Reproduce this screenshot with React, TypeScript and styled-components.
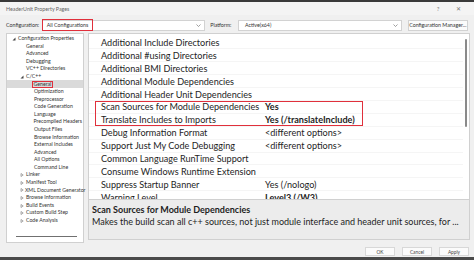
import styled, { createGlobalStyle } from "styled-components";

const GlobalStyle = createGlobalStyle`
  html, body {
    margin: 0;
    padding: 0;
    background: #f0f0f0;
  }
  body {
    font-family: Lato, "Liberation Sans", sans-serif;
  }
`;

const Window = styled.div`
  width: 474px;
  height: 260px;
  box-sizing: border-box;
  border-top: 2px solid #3a3a3a;
  border-bottom: 3px solid #4a4a4a;
  background: #f0f0f0;
  display: flex;
  flex-direction: column;
  overflow: hidden;
`;

const TitleBar = styled.div`
  height: 13px;
  display: flex;
  align-items: center;
  padding: 0 6px;
  font-size: 5.3px;
  color: #666;
  background: #f4f4f4;
`;

const TitleText = styled.div`
  flex: 1;
`;

const TitleButton = styled.div`
  width: 20px;
  text-align: center;
  font-size: 6px;
  color: #777;
`;

const ConfigBar = styled.div`
  height: 12px;
  margin-top: 4px;
  padding: 0 6px;
  display: flex;
  align-items: center;
  font-size: 5.3px;
  color: #333;
`;

const Label = styled.div<{ $width: number; $gap?: number }>`
  width: ${({ $width }) => $width}px;
  margin-left: ${({ $gap }) => $gap ?? 0}px;
`;

const Combo = styled.div<{ $width: number }>`
  width: ${({ $width }) => $width}px;
  height: 11px;
  box-sizing: border-box;
  background: #fff;
  border: 1px solid #d2d2d2;
  display: flex;
  align-items: center;
  justify-content: space-between;
  padding-right: 3px;
`;

const ComboValue = styled.div<{ $marked?: boolean }>`
  height: ${({ $marked }) => ($marked ? "12px" : "auto")};
  margin-left: ${({ $marked }) => ($marked ? "-1px" : "2px")};
  box-sizing: border-box;
  display: flex;
  align-items: center;
  padding: 0 4px;
  border: ${({ $marked }) => ($marked ? "1.5px solid #e0303c" : "none")};
`;

const ManagerButton = styled.div`
  margin-left: 6px;
  width: 61px;
  height: 11px;
  box-sizing: border-box;
  border: 1px solid #d2d2d2;
  background: #fbfbfb;
  display: flex;
  align-items: center;
  justify-content: center;
`;

const Main = styled.div`
  height: 210px;
  margin-top: 2px;
  padding: 0 4px 0 6px;
  display: flex;
  gap: 4px;
`;

const Tree = styled.div`
  width: 78px;
  box-sizing: border-box;
  background: #fff;
  border: 1px solid #d0d0d0;
  padding-top: 1px;
  display: flex;
  flex-direction: column;
  position: relative;
  font-size: 5.2px;
  color: #333;
`;

const TreeItem = styled.div<{ $depth: number; $selected?: boolean }>`
  height: 7.58px;
  flex: none;
  display: flex;
  align-items: center;
  padding-left: ${({ $depth }) => $depth * 8 + 5}px;
  background: ${({ $selected }) => ($selected ? "#dadada" : "transparent")};
  white-space: nowrap;
`;

const Arrow = styled.span`
  width: 5px;
  display: flex;
  align-items: center;
`;

const TreeLabel = styled.span<{ $marked?: boolean }>`
  padding: 0 1px;
  margin-left: ${({ $marked }) => ($marked ? "-1.5px" : "0")};
  border: ${({ $marked }) => ($marked ? "1.3px solid #e0303c" : "none")};
  line-height: 5.5px;
`;

const HScroll = styled.div`
  position: absolute;
  left: 9px;
  right: 6px;
  bottom: 5px;
  height: 1.5px;
  background: #707070;
`;

const RightCol = styled.div`
  flex: 1;
  display: flex;
  flex-direction: column;
`;

const Grid = styled.div`
  height: 167px;
  box-sizing: border-box;
  background: #fff;
  border: 1px solid #d0d0d0;
  display: flex;
  overflow: hidden;
`;

const Rows = styled.div`
  flex: 1;
  padding-top: 2.5px;
  font-size: 9.1px;
  color: #1e1e1e;
`;

const Row = styled.div`
  height: 12.9px;
  box-sizing: border-box;
  display: flex;
  align-items: center;
  border-bottom: 1px solid #f5f5f5;
  white-space: nowrap;
`;

const NameCell = styled.div`
  width: 174px;
  box-sizing: border-box;
  padding-left: 12px;
`;

const ValueCell = styled.div<{ $bold?: boolean }>`
  padding-left: 2px;
  font-weight: ${({ $bold }) => ($bold ? 700 : 400)};
`;

const Marked = styled.div`
  position: relative;
  &::after {
    content: "";
    position: absolute;
    left: 6px;
    top: 0;
    width: 268px;
    height: 25px;
    border: 1.5px solid #e0303c;
    box-sizing: border-box;
  }
`;

const VScroll = styled.div`
  width: 6px;
  display: flex;
  flex-direction: column;
  align-items: center;
  padding-top: 5px;
`;

const Thumb = styled.div`
  width: 2px;
  height: 88px;
  background: #8a8a8a;
  border-radius: 1px;
`;

const Description = styled.div`
  height: 40px;
  box-sizing: border-box;
  background: #ececec;
  border: 1px solid #d0d0d0;
  border-top: none;
  padding: 4px 3px 0;
  font-size: 9px;
  color: #1e1e1e;
  white-space: nowrap;
`;

const DescTitle = styled.div`
  font-weight: 700;
  margin-bottom: 1px;
`;

const Footer = styled.div`
  margin-top: 4px;
  padding-right: 5px;
  display: flex;
  justify-content: flex-end;
  gap: 7px;
`;

const DialogButton = styled.div`
  width: 30px;
  height: 9px;
  box-sizing: border-box;
  border: 1px solid #d8d8d8;
  background: #fbfbfb;
  font-size: 4.8px;
  color: #444;
  display: flex;
  align-items: center;
  justify-content: center;
`;

const Chevron = () => (
  <svg width="5" height="3" viewBox="0 0 5 3">
    <path d="M0.5 0.5 L2.5 2.5 L4.5 0.5" fill="none" stroke="#777" strokeWidth="0.7" />
  </svg>
);

const Expanded = () => (
  <svg width="4" height="4" viewBox="0 0 4 4">
    <path d="M3.5 0.5 L3.5 3.5 L0.5 3.5 Z" fill="#444" />
  </svg>
);

const Collapsed = () => (
  <svg width="4" height="4" viewBox="0 0 4 4">
    <path d="M1 0.5 L3.2 2 L1 3.5 Z" fill="none" stroke="#777" strokeWidth="0.6" />
  </svg>
);

type TreeNode = { label: string; depth: number; arrow?: "open" | "closed"; selected?: boolean };

const treeItems: TreeNode[] = [
  { label: "Configuration Properties", depth: 0, arrow: "open" },
  { label: "General", depth: 1 },
  { label: "Advanced", depth: 1 },
  { label: "Debugging", depth: 1 },
  { label: "VC++ Directories", depth: 1 },
  { label: "C/C++", depth: 1, arrow: "open" },
  { label: "General", depth: 2, selected: true },
  { label: "Optimization", depth: 2 },
  { label: "Preprocessor", depth: 2 },
  { label: "Code Generation", depth: 2 },
  { label: "Language", depth: 2 },
  { label: "Precompiled Headers", depth: 2 },
  { label: "Output Files", depth: 2 },
  { label: "Browse Information", depth: 2 },
  { label: "External Includes", depth: 2 },
  { label: "Advanced", depth: 2 },
  { label: "All Options", depth: 2 },
  { label: "Command Line", depth: 2 },
  { label: "Linker", depth: 1, arrow: "closed" },
  { label: "Manifest Tool", depth: 1, arrow: "closed" },
  { label: "XML Document Generator", depth: 1, arrow: "closed" },
  { label: "Browse Information", depth: 1, arrow: "closed" },
  { label: "Build Events", depth: 1, arrow: "closed" },
  { label: "Custom Build Step", depth: 1, arrow: "closed" },
  { label: "Code Analysis", depth: 1, arrow: "closed" },
];

type Prop = { name: string; value?: string; bold?: boolean };

const before: Prop[] = [
  { name: "Additional Include Directories" },
  { name: "Additional #using Directories" },
  { name: "Additional BMI Directories" },
  { name: "Additional Module Dependencies" },
  { name: "Additional Header Unit Dependencies" },
];

const marked: Prop[] = [
  { name: "Scan Sources for Module Dependencies", value: "Yes", bold: true },
  { name: "Translate Includes to Imports", value: "Yes (/translateInclude)", bold: true },
];

const after: Prop[] = [
  { name: "Debug Information Format", value: "<different options>" },
  { name: "Support Just My Code Debugging", value: "<different options>" },
  { name: "Common Language RunTime Support" },
  { name: "Consume Windows Runtime Extension" },
  { name: "Suppress Startup Banner", value: "Yes (/nologo)" },
  { name: "Warning Level", value: "Level3 (/W3)", bold: true },
];

const PropRow = ({ name, value, bold }: Prop) => (
  <Row>
    <NameCell>{name}</NameCell>
    <ValueCell $bold={bold}>{value}</ValueCell>
  </Row>
);

const App = () => {
  return (
    <Window>
      <GlobalStyle />
      <TitleBar>
        <TitleText>HeaderUnit Property Pages</TitleText>
        <TitleButton>?</TitleButton>
        <TitleButton>✕</TitleButton>
      </TitleBar>
      <ConfigBar>
        <Label $width={36}>Configuration:</Label>
        <Combo $width={165}>
          <ComboValue $marked>All Configurations</ComboValue>
          <Chevron />
        </Combo>
        <Label $width={28} $gap={5}>Platform:</Label>
        <Combo $width={165}>
          <ComboValue>Active(x64)</ComboValue>
          <Chevron />
        </Combo>
        <ManagerButton>Configuration Manager...</ManagerButton>
      </ConfigBar>
      <Main>
        <Tree>
          {treeItems.map((item, i) => (
            <TreeItem key={i} $depth={item.depth} $selected={item.selected}>
              <Arrow>
                {item.arrow === "open" && <Expanded />}
                {item.arrow === "closed" && <Collapsed />}
              </Arrow>
              <TreeLabel $marked={item.selected}>{item.label}</TreeLabel>
            </TreeItem>
          ))}
          <HScroll />
        </Tree>
        <RightCol>
          <Grid>
            <Rows>
              {before.map((p) => (
                <PropRow key={p.name} {...p} />
              ))}
              <Marked>
                {marked.map((p) => (
                  <PropRow key={p.name} {...p} />
                ))}
              </Marked>
              {after.map((p) => (
                <PropRow key={p.name} {...p} />
              ))}
            </Rows>
            <VScroll>
              <Thumb />
            </VScroll>
          </Grid>
          <Description>
            <DescTitle>Scan Sources for Module Dependencies</DescTitle>
            <div>
              Makes the build scan all c++ sources, not just module interface and header unit sources, for ...
            </div>
          </Description>
        </RightCol>
      </Main>
      <Footer>
        <DialogButton>OK</DialogButton>
        <DialogButton>Cancel</DialogButton>
        <DialogButton>Apply</DialogButton>
      </Footer>
    </Window>
  );
};

export default App;
